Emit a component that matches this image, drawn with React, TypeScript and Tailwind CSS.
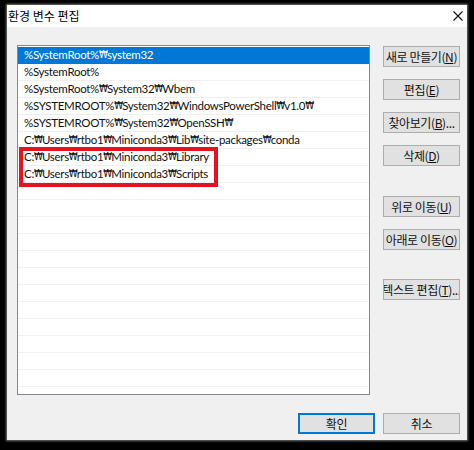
import React from 'react';

const LATIN = { fontFamily: 'Lato, "Noto Sans", "Noto Sans CJK KR", sans-serif' };
const KOREAN = { fontFamily: '"Noto Sans CJK KR", "Noto Sans", sans-serif' };
const WON = { fontFamily: '"DejaVu Sans Condensed", "DejaVu Sans", sans-serif' };

const paths = [
  '%SystemRoot%₩system32',
  '%SystemRoot%',
  '%SystemRoot%₩System32₩Wbem',
  '%SYSTEMROOT%₩System32₩WindowsPowerShell₩v1.0₩',
  '%SYSTEMROOT%₩System32₩OpenSSH₩',
  'C:₩Users₩rtbo1₩Miniconda3₩Lib₩site-packages₩conda',
  'C:₩Users₩rtbo1₩Miniconda3₩Library',
  'C:₩Users₩rtbo1₩Miniconda3₩Scripts',
];

// listview keeps drawing empty rows down to the bottom
const ROW_COUNT = 20;

// the Korean locale shows the path separator as a narrow won sign
const PathText = ({ text }: { text: string }) => {
  const parts = text.split('₩');
  return (
    <>
      {parts.map((part, i) => (
        <React.Fragment key={i}>
          {i > 0 && (
            <span
              className="inline-block w-[8px] text-center text-[10px] tracking-normal"
              style={WON}>
              ₩
            </span>
          )}
          {part}
        </React.Fragment>
      ))}
    </>
  );
};

type BtnProps = {
  label: string;
  hotkey?: string;
  suffix?: string;
  primary?: boolean;
  className?: string;
};

const DlgButton = ({ label, hotkey, suffix, primary, className = '' }: BtnProps) => (
  <button
    className={`h-[21px] w-[77px] flex items-center justify-center whitespace-nowrap overflow-hidden bg-[#e1e1e1] text-[12px] tracking-[-0.4px] leading-none text-[#111] ${
      primary ? 'border-2 border-[#0078d7]' : 'border border-[#adadad]'
    } ${className}`}
    style={KOREAN}>
    <span>{label}</span>
    {hotkey && (
      <span>
        (<span className="underline underline-offset-1">{hotkey}</span>)
      </span>
    )}
    {suffix && <span>{suffix}</span>}
  </button>
);

export default function App() {
  return (
    <div className="w-[474px] h-[450px] bg-black pt-[5px] pl-[7px] overflow-hidden">
      <div className="w-[460px] h-[435px] bg-[#f0f0f0] flex flex-col shadow-[0_0_2px_1px_#777]">
        {/* Title bar */}
        <div className="h-[22px] bg-white flex items-center justify-between pl-[1px] pr-[3px]">
          <span className="text-[12px] leading-none text-black" style={KOREAN}>
            환경 변수 편집
          </span>
          <svg width="10" height="10" viewBox="0 0 10 10" className="mr-[1px]">
            <path d="M0.5 0.5 L9.5 9.5 M9.5 0.5 L0.5 9.5" stroke="#111" strokeWidth="1.1" />
          </svg>
        </div>

        {/* Body */}
        <div className="flex-1 flex flex-col pl-[10px] pr-[7px] pt-[18px]">
          <div className="flex gap-[13px]">
            {/* Path list */}
            <div className="relative w-[353px] h-[350px] bg-white border border-[#828790] pt-[1px] overflow-hidden">
              {Array.from({ length: ROW_COUNT }).map((_, i) => {
                const text = paths[i];
                const selected = i === 0;
                return (
                  <div
                    key={i}
                    className={`h-[17px] flex items-center pl-[6px] text-[11.5px] tracking-[-0.3px] leading-none whitespace-nowrap border-b ${
                      selected
                        ? 'bg-[#0078d7] text-white border-[#0078d7]'
                        : 'text-[#111] border-[#f0f0f0]'
                    }`}
                    style={LATIN}>
                    {text ? <PathText text={text} /> : null}
                  </div>
                );
              })}
              {/* red highlight drawn over the two Miniconda rows */}
              <div className="absolute left-[1px] top-[101px] w-[199px] h-[40px] border-[4px] border-[#e5131f]" />
            </div>

            {/* Side buttons */}
            <div className="flex flex-col gap-[12px] pt-[1px]">
              <DlgButton label="새로 만들기" hotkey="N" />
              <DlgButton label="편집" hotkey="E" />
              <DlgButton label="찾아보기" hotkey="B" suffix="..." />
              <DlgButton label="삭제" hotkey="D" />
              <DlgButton label="위로 이동" hotkey="U" className="mt-[18px]" />
              <DlgButton label="아래로 이동" hotkey="O" />
              <DlgButton label="텍스트 편집" hotkey="T" suffix="..." className="mt-[17px]" />
            </div>
          </div>

          {/* OK / Cancel */}
          <div className="flex justify-end gap-[8px] mt-[18px]">
            <DlgButton label="확인" primary />
            <DlgButton label="취소" />
          </div>
        </div>
      </div>
    </div>
  );
}
